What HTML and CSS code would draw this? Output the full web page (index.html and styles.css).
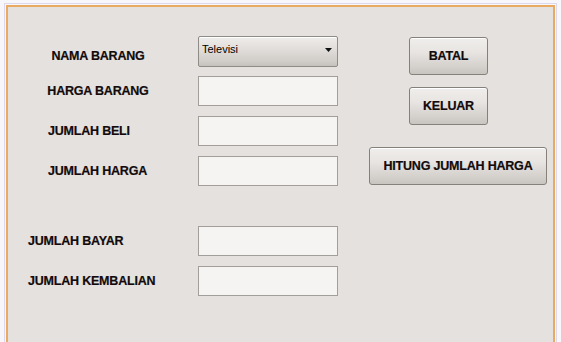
FILE: index.html
```html
<!DOCTYPE html>
<html lang="id">
<head>
  <meta charset="UTF-8" />
  <title>Hitung Harga Barang</title>
  <link rel="stylesheet" href="styles.css">
</head>
<body>
  <div class="frame">
    <form class="form">
      <div class="row">
        <label class="lbl lbl-mid lbl-low">NAMA BARANG</label>
        <div class="combo">
          <span>Televisi</span>
          <svg class="arrow" width="7" height="4" viewBox="0 0 7 4"><path d="M0 0h7L3.5 4z" fill="#111"/></svg>
        </div>
      </div>
      <div class="row">
        <label class="lbl lbl-mid">HARGA BARANG</label>
        <input class="field" type="text">
      </div>
      <div class="row">
        <label class="lbl lbl-in">JUMLAH BELI</label>
        <input class="field" type="text">
      </div>
      <div class="row">
        <label class="lbl lbl-in">JUMLAH HARGA</label>
        <input class="field" type="text">
      </div>
      <div class="row row-gap">
        <label class="lbl lbl-out">JUMLAH BAYAR</label>
        <input class="field" type="text">
      </div>
      <div class="row">
        <label class="lbl lbl-out">JUMLAH KEMBALIAN</label>
        <input class="field" type="text">
      </div>
    </form>

    <div class="actions">
      <button class="btn btn-small" type="button">BATAL</button>
      <button class="btn btn-small" type="button">KELUAR</button>
      <button class="btn btn-wide" type="button">HITUNG JUMLAH HARGA</button>
    </div>
  </div>
</body>
</html>
```

FILE: styles.css
```css
body { margin: 0; padding: 5px 6px 0 6px; background: #f7f6fb; height: 342px; box-sizing: border-box; overflow: hidden; font-family: "Liberation Sans", Arial, sans-serif; color: #120a0a; }
.frame { display: flex; height: 100%; background: #e4e1de; border: 2px solid #e9aa62; border-bottom: none; outline: 1px solid #dcd8ee; outline-offset: 1px; }
.form { flex: 0 0 361px; padding-top: 29px; margin: 0; }
.row { display: flex; align-items: center; height: 30px; margin-bottom: 10px; }
.row-gap { margin-top: 40px; }
.lbl { flex: 0 0 190px; box-sizing: border-box; font-size: 12.5px; font-weight: bold; letter-spacing: -0.2px; -webkit-text-stroke: 0.2px #120a0a; }
.lbl-mid { text-align: center; padding-right: 10px; }
.lbl-low { padding-top: 9px; }
.lbl-in { padding-left: 40px; }
.lbl-out { padding-left: 20px; }
.field { width: 140px; height: 30px; box-sizing: border-box; margin: 0; border: 1px solid #a29e9a; background: #f6f4f2; padding: 0 4px; }
.combo { width: 140px; height: 31px; box-sizing: border-box; display: flex; align-items: center; justify-content: space-between; padding: 0 5px 4px 3px; border: 1px solid #8f8b87; border-radius: 2px; background: linear-gradient(#efedeb, #e1dedb 40%, #d0ccc8 85%, #c4c0bc); box-shadow: inset 0 1px 0 #fff; font-size: 11px; color: #000; }
.arrow { display: block; margin-top: 2px; }
.actions { display: flex; flex-direction: column; align-items: flex-start; padding-top: 30px; }
.btn { height: 38px; box-sizing: border-box; border: 1px solid #858079; border-radius: 3px; background: linear-gradient(#f0eeec, #e7e4e1 40%, #d4d0cc 80%, #c8c4c0); box-shadow: inset 0 1px 0 #fff; font-family: "Liberation Sans", Arial, sans-serif; font-size: 12.5px; font-weight: bold; letter-spacing: -0.2px; -webkit-text-stroke: 0.2px #120a0a; color: #120a0a; padding: 0; }
.btn-small { width: 79px; margin-left: 40px; }
.btn-small + .btn-small { margin-top: 12px; }
.btn-wide { width: 178px; margin-top: 22px; }
```
